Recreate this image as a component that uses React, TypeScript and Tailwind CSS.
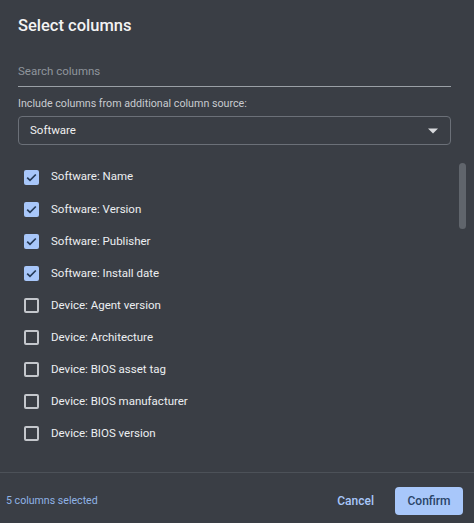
import { useState } from 'react';

const columns = [
  { label: 'Software: Name', checked: true },
  { label: 'Software: Version', checked: true },
  { label: 'Software: Publisher', checked: true },
  { label: 'Software: Install date', checked: true },
  { label: 'Device: Agent version', checked: false },
  { label: 'Device: Architecture', checked: false },
  { label: 'Device: BIOS asset tag', checked: false },
  { label: 'Device: BIOS manufacturer', checked: false },
  { label: 'Device: BIOS version', checked: false },
];

export default function App() {
  const [items, setItems] = useState(columns);

  const toggle = (index: number) => {
    setItems(items.map((it, i) => (i === index ? { ...it, checked: !it.checked } : it)));
  };

  return (
    <div
      className="w-[474px] h-[523px] bg-[#3a3e45] text-[#e3e3e3] flex flex-col overflow-hidden"
      style={{ fontFamily: 'Roboto, "Liberation Sans", sans-serif' }}
    >
      <div className="px-[18px] pt-[15px]">
        <h2 className="text-[16.5px] font-medium leading-[22px] text-[#f3f3f3]">Select columns</h2>

        {/* Search */}
        <div className="mt-[21px] border-b border-[#9aa0a6] pb-[4px] mr-[5px]">
          <input
            placeholder="Search columns"
            className="w-full bg-transparent text-[11.5px] leading-[16px] outline-none placeholder:text-[#8f959c]"
          />
        </div>

        <p className="mt-[10px] text-[10.7px] leading-[14px] text-[#c8cbd0]">
          Include columns from additional column source:
        </p>

        {/* Source select */}
        <div className="mt-[5px] mr-[5px] h-[29px] rounded-[4px] border border-[#6b7078] flex items-center justify-between pl-[11px] pr-[12px]">
          <span className="text-[11.5px] text-[#f0f0f0]">Software</span>
          <svg width="10" height="6" viewBox="0 0 10 5" className="text-[#d8dadd]">
            <path d="M0 0h10L5 5z" fill="currentColor" />
          </svg>
        </div>
      </div>

      {/* Column list */}
      <div className="relative flex-1 mt-[16px]">
        <div className="flex flex-col pl-[24px]">
          {items.map((item, index) => (
            <label
              key={index}
              className="flex items-center h-[32.1px] cursor-pointer"
              onClick={() => toggle(index)}
            >
              {item.checked ? (
                <span className="w-[15px] h-[15px] rounded-[2px] bg-[#a8c7fa] flex items-center justify-center">
                  <svg width="11" height="9" viewBox="0 0 11 9">
                    <path d="M1.2 4.6 L4 7.3 L9.8 1.5" stroke="#253a57" strokeWidth="1.7" fill="none" />
                  </svg>
                </span>
              ) : (
                <span className="w-[15px] h-[15px] rounded-[2px] border-2 border-[#c4c7cc]" />
              )}
              <span className="ml-[12px] text-[11.5px] text-[#eceef1]">{item.label}</span>
            </label>
          ))}
        </div>
        {/* Scrollbar thumb */}
        <div className="absolute right-[8px] top-[2px] w-[7px] h-[66px] rounded-full bg-[#60656c]" />
      </div>

      {/* Footer */}
      <div className="border-t border-[#4c5158] h-[51px] flex items-start justify-between pt-[14px] pl-[6px] pr-[11px]">
        <span className="text-[10.6px] leading-[28px] text-[#8fb3e6]">5 columns selected</span>
        <div className="flex items-center gap-[21px]">
          <button className="text-[12px] font-medium text-[#a8c7fa]">Cancel</button>
          <button className="w-[68px] h-[28px] rounded-[4px] bg-[#a8c7fa] text-[12px] font-medium text-[#2a4468]">
            Confirm
          </button>
        </div>
      </div>
    </div>
  );
}
